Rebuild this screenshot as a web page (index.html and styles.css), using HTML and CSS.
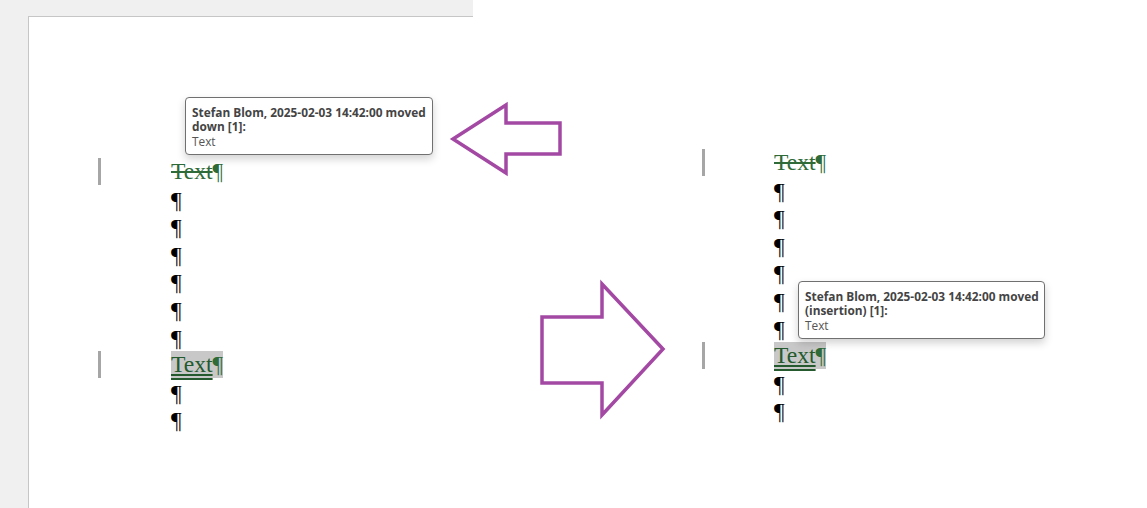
FILE: index.html
```html
<!DOCTYPE html>
<html lang="en">
<head>
<meta charset="utf-8">
<title>Moved text tracking</title>
<link rel="stylesheet" href="styles.css">
</head>
<body>
<div class="screen">
  <section class="word">
    <div class="page">
      <div class="doc">
        <div class="line"><span class="bar on"></span><span class="moved-from">Text</span><span class="mark-green">¶</span></div>
        <div class="line"><span class="bar"></span><span class="mark">¶</span></div>
        <div class="line"><span class="bar"></span><span class="mark">¶</span></div>
        <div class="line"><span class="bar"></span><span class="mark">¶</span></div>
        <div class="line"><span class="bar"></span><span class="mark">¶</span></div>
        <div class="line"><span class="bar"></span><span class="mark">¶</span></div>
        <div class="line"><span class="bar"></span><span class="mark">¶</span></div>
        <div class="line"><span class="bar on"></span><span class="moved-to"><span class="u">Text</span><span class="mark-green">¶</span></span></div>
        <div class="line"><span class="bar"></span><span class="mark">¶</span></div>
        <div class="line"><span class="bar"></span><span class="mark">¶</span></div>
      </div>
    </div>
  </section>
  <section class="plain">
    <div class="doc doc-right">
      <div class="line"><span class="bar on"></span><span class="moved-from">Text</span><span class="mark-green">¶</span></div>
      <div class="line"><span class="bar"></span><span class="mark">¶</span></div>
      <div class="line"><span class="bar"></span><span class="mark">¶</span></div>
      <div class="line"><span class="bar"></span><span class="mark">¶</span></div>
      <div class="line"><span class="bar"></span><span class="mark">¶</span></div>
      <div class="line"><span class="bar"></span><span class="mark">¶</span></div>
      <div class="line"><span class="bar"></span><span class="mark">¶</span></div>
      <div class="line"><span class="bar on"></span><span class="moved-to"><span class="u">Text</span><span class="mark-green">¶</span></span></div>
      <div class="line"><span class="bar"></span><span class="mark">¶</span></div>
      <div class="line"><span class="bar"></span><span class="mark">¶</span></div>
    </div>
  </section>

  <div class="tip tip-left">
    <div class="tip-head">Stefan Blom, 2025-02-03 14:42:00 moved down [1]:</div>
    <div class="tip-body">Text</div>
  </div>
  <div class="tip tip-right">
    <div class="tip-head">Stefan Blom, 2025-02-03 14:42:00 moved (insertion) [1]:</div>
    <div class="tip-body">Text</div>
  </div>

  <svg class="arrows" width="1147" height="508" viewBox="0 0 1147 508">
    <polygon points="453,139 506,105 506,123 560,123 560,154 506,154 506,173" />
    <polygon points="542,317 602,317 602,284 663,349 602,415 602,383 542,383" />
  </svg>
</div>
</body>
</html>
```

FILE: styles.css
```css
html, body {
  margin: 0;
  padding: 0;
  background: #ffffff;
}

.screen {
  position: relative;
  display: flex;
  width: 1147px;
  height: 508px;
  overflow: hidden;
}

.word {
  width: 473px;
  flex: none;
  box-sizing: border-box;
  padding: 16px 0 0 28px;
  background: #f0f0f0;
}

.page {
  height: 100%;
  box-sizing: border-box;
  background: #ffffff;
  border-left: 1px solid #c6c6c6;
  border-top: 1px solid #c6c6c6;
  padding: 141px 0 0 69px;
}

.plain {
  flex: 1;
  padding: 149px 0 0 229px;
}

.doc {
  display: flex;
  flex-direction: column;
  font-family: "Liberation Serif", "Times New Roman", serif;
  font-size: 23.6px;
  line-height: 27.6px;
  color: #000000;
}

.line {
  display: flex;
  align-items: flex-start;
  height: 27.6px;
  white-space: nowrap;
}

.bar {
  flex: none;
  width: 3px;
  height: 27px;
  margin-right: 70px;
}

.doc-right .bar {
  margin-right: 69px;
}

.bar.on {
  background: #a6a6a6;
}

.mark {
  padding-top: 1px;
}

.moved-from {
  color: #2e6b38;
  text-decoration: line-through;
  text-decoration-color: #2e6b38;
}

.mark-green {
  color: #2e6b38;
}

.moved-to {
  display: inline-block;
  height: 27px;
  background: #c8c8c8;
  color: #245a2e;
}

.moved-to .u {
  text-decoration: underline double;
  text-decoration-color: #245a2e;
}

.tip {
  position: absolute;
  box-sizing: border-box;
  height: 58px;
  padding: 7px 2px 0 6px;
  background: #ffffff;
  border: 1px solid #707070;
  border-radius: 4px;
  box-shadow: 0 4px 9px rgba(0, 0, 0, 0.18);
  font-family: "Open Sans", "Noto Sans", sans-serif;
  font-size: 11.85px;
  line-height: 14px;
  color: #444444;
}

.tip-left {
  left: 185px;
  top: 97px;
  width: 248px;
}

.tip-right {
  left: 798px;
  top: 281px;
  width: 247px;
}

.tip-head {
  font-weight: 700;
}

.tip-body {
  margin-top: 1px;
  color: #555555;
}

.arrows {
  position: absolute;
  left: 0;
  top: 0;
  pointer-events: none;
}

.arrows polygon {
  fill: none;
  stroke: #a349a4;
  stroke-width: 3.5;
  stroke-linejoin: miter;
}
```
